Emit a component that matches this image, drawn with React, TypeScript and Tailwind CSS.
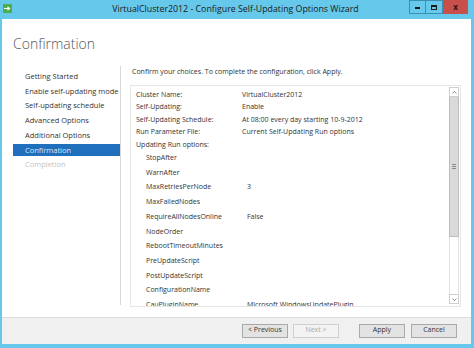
import React from "react";

const font = { fontFamily: '"Open Sans", "Noto Sans", sans-serif' };

const navItems = [
  "Getting Started",
  "Enable self-updating mode",
  "Self-updating schedule",
  "Advanced Options",
  "Additional Options",
];

const top: [string, string][] = [
  ["Cluster Name:", "VirtualCluster2012"],
  ["Self-Updating:", "Enable"],
  ["Self-Updating Schedule:", "At 08:00 every day starting 10-9-2012"],
  ["Run Parameter File:", "Current Self-Updating Run options"],
  ["Updating Run options:", ""],
];

const sub: [string, string][] = [
  ["StopAfter", ""],
  ["WarnAfter", ""],
  ["MaxRetriesPerNode", "3"],
  ["MaxFailedNodes", ""],
  ["RequireAllNodesOnline", "False"],
  ["NodeOrder", ""],
  ["RebootTimeoutMinutes", ""],
  ["PreUpdateScript", ""],
  ["PostUpdateScript", ""],
  ["ConfigurationName", ""],
  ["CauPluginName", "Microsoft.WindowsUpdatePlugin"],
];

function Btn({ label, disabled }: { label: string; disabled?: boolean }) {
  return (
    <div
      className={
        "w-[46px] h-[14px] flex items-center justify-center text-[7px] border " +
        (disabled
          ? "border-[#cfcfcf] bg-[#f3f3f3] text-[#a8a8a8]"
          : "border-[#a9a9a9] bg-[#e3e3e3] text-[#333]")
      }
    >
      {label}
    </div>
  );
}

export default function App() {
  return (
    <div
      className="w-[474px] h-[348px] bg-[#66c8ea] flex flex-col overflow-hidden"
      style={font}
    >
      {/* title bar */}
      <div className="h-[19px] shrink-0 flex items-start">
        <div className="ml-[3px] mt-[4px] w-[9px] h-[9px] bg-[#4cae4c] flex items-center justify-center">
          <svg width="7" height="5" viewBox="0 0 7 5">
            <path d="M0 2.5 H5 M3.5 1 L5.5 2.5 L3.5 4" stroke="#fff" strokeWidth="1.2" fill="none" />
          </svg>
        </div>
        <div className="flex-1 text-center text-[8.8px] leading-[19px] text-[#1b1b1b] pl-[50px] whitespace-nowrap">
          VirtualCluster2012 - Configure Self-Updating Options Wizard
        </div>
        <div className="flex mr-[6px] h-[14px]">
          <div className="w-[17px] h-[14px] border border-[#3c8fb0] flex items-end justify-center pb-[4px]">
            <div className="w-[5px] h-[2px] bg-[#1b1b1b]" />
          </div>
          <div className="w-[17px] h-[14px] border-y border-r border-[#3c8fb0] flex items-center justify-center">
            <div className="w-[6px] h-[5px] border border-[#1b1b1b] border-t-2" />
          </div>
          <div className="w-[25px] h-[14px] bg-[#c7504b] flex items-center justify-center text-[8px] font-bold text-[#2a1212] leading-none">
            x
          </div>
        </div>
      </div>

      {/* client */}
      <div className="flex-1 min-h-0 ml-[2px] mr-[3px] mb-[4px] flex flex-col">
        <div className="flex-1 min-h-0 overflow-hidden bg-white flex flex-col">
          <div className="h-[45px] shrink-0 pt-[15px] pl-[11px] text-[14px] leading-[20px] font-light text-[#555]">
            Confirmation
          </div>
          <div className="flex-1 min-h-0 flex">
            {/* nav */}
            <div className="w-[118px] pl-[11px] pt-[5px] flex flex-col text-[7.5px] leading-[14.7px]">
              {navItems.map((n) => (
                <div key={n} className="pl-[12px] text-[#333] whitespace-nowrap">
                  {n}
                </div>
              ))}
              <div className="pl-[12px] bg-[#1f6fbd] text-[#d8e8f8] h-[12px] leading-[12px] my-[1.35px]">
                Confirmation
              </div>
              <div className="pl-[12px] text-[#c4c4c4]">Completion</div>
            </div>
            <div className="w-px bg-[#d8d8d8] mt-[2px] mb-[12px]" />
            {/* content */}
            <div className="flex-1 min-h-0 flex flex-col pl-[9px] pr-[10px] pb-[10px]">
              <div className="text-[7px] leading-[12px] pt-[2px] pl-[2px] text-[#333] whitespace-nowrap">
                Confirm your choices. To complete the configuration, click Apply.
              </div>
              <div className="flex-1 min-h-0 mt-[7px] border border-[#e6e6e6] flex overflow-hidden">
                <div className="flex-1 min-h-0 pl-[5px] pt-[2.5px] text-[7px] text-[#333] overflow-hidden">
                  {top.map(([a, b]) => (
                    <div key={a} className="flex leading-[12.5px] whitespace-nowrap">
                      <div className="w-[106px]">{a}</div>
                      <div>{b}</div>
                    </div>
                  ))}
                  <div className="pl-[10px]">
                    {sub.map(([a, b]) => (
                      <div key={a} className="flex leading-[14.7px] whitespace-nowrap">
                        <div className="w-[101px]">{a}</div>
                        <div>{b}</div>
                      </div>
                    ))}
                  </div>
                </div>
                {/* scrollbar */}
                <div className="w-[10px] mr-[1px] mt-[1px] mb-[2px] flex flex-col">
                  <div className="h-[10px] border border-[#cfcfcf] bg-white flex items-center justify-center">
                    <svg width="5" height="3" viewBox="0 0 5 3">
                      <path d="M0.5 2.5 L2.5 0.5 L4.5 2.5" stroke="#777" strokeWidth="0.8" fill="none" />
                    </svg>
                  </div>
                  <div className="h-[140px] border-x border-b border-[#bdbdbd] bg-[#dadada] flex items-center justify-center">
                    <div className="flex flex-col gap-[1px]">
                      <div className="w-[4px] h-px bg-[#8a8a8a]" />
                      <div className="w-[4px] h-px bg-[#8a8a8a]" />
                      <div className="w-[4px] h-px bg-[#8a8a8a]" />
                    </div>
                  </div>
                  <div className="flex-1 border-x border-[#e2e2e2] bg-white" />
                  <div className="h-[10px] border border-[#cfcfcf] bg-white flex items-center justify-center">
                    <svg width="5" height="3" viewBox="0 0 5 3">
                      <path d="M0.5 0.5 L2.5 2.5 L4.5 0.5" stroke="#777" strokeWidth="0.8" fill="none" />
                    </svg>
                  </div>
                </div>
              </div>
            </div>
          </div>
        </div>
        {/* footer */}
        <div className="h-[27px] shrink-0 border-t border-[#dcdcdc] bg-[#f0f0f0] flex items-center pr-[14px] pb-[1px]">
          <div className="flex-1" />
          <div className="flex gap-[5px]">
            <Btn label="< Previous" />
            <Btn label="Next >" disabled />
          </div>
          <div className="flex gap-[6px] ml-[20px]">
            <Btn label="Apply" />
            <Btn label="Cancel" />
          </div>
        </div>
      </div>
    </div>
  );
}
